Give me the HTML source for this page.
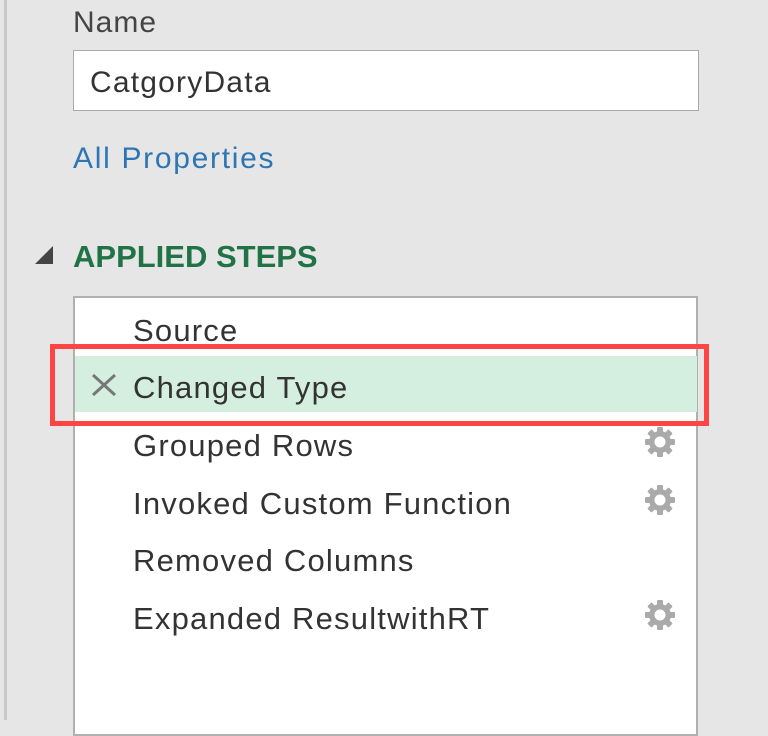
<!DOCTYPE html>
<html><head><style>
body{margin:0;width:768px;height:720px;background:#e6e6e6;position:relative;overflow:hidden;font-family:"Liberation Sans",sans-serif;color:#333}
.a{position:absolute;white-space:nowrap}
.gear{position:absolute;width:34px;height:34px}
.s{font-size:31px;letter-spacing:1.2px}
</style></head><body>
<div class="a" style="left:4px;top:0;width:3px;height:720px;background:#c8c8c8"></div>
<div class="a" style="left:73px;top:6px;font-size:30px;letter-spacing:1px;color:#444">Name</div>
<div class="a" style="left:73px;top:50px;width:624px;height:59px;background:#fff;border:1px solid #aaa"></div>
<div class="a" style="left:90px;top:66px;font-size:30px;letter-spacing:1.2px;color:#333">CatgoryData</div>
<div class="a" style="left:73px;top:142px;font-size:30px;letter-spacing:1.7px;color:#2e75b6">All Properties</div>
<svg class="a" style="left:33px;top:244px" width="20" height="22"><polygon points="20,2 20,20 2,20" fill="#444"/></svg>
<div class="a" style="left:73px;top:239px;font-size:31px;font-weight:bold;color:#217346">APPLIED STEPS</div>
<div class="a" style="left:73px;top:296px;width:625px;height:440px;background:#fff;border:2px solid #b0b0b0;box-sizing:border-box"></div>
<div class="a" style="left:75px;top:356px;width:622px;height:56px;background:#d4eee0"></div>
<div class="a" style="left:50px;top:344px;width:659px;height:82px;border:5px solid #f44;box-sizing:border-box"></div>
<svg class="a" style="left:90px;top:372px" width="28" height="26"><path d="M3 3L25 23M25 3L3 23" stroke="#777" stroke-width="3"/></svg>
<div class="a s" style="left:133px;top:313px">Source</div>
<div class="a s" style="left:133px;top:370px">Changed Type</div>
<div class="a s" style="left:133px;top:428px">Grouped Rows</div>
<div class="a s" style="left:133px;top:486px">Invoked Custom Function</div>
<div class="a s" style="left:133px;top:543px">Removed Columns</div>
<div class="a s" style="left:133px;top:601px">Expanded ResultwithRT</div>
<svg width="0" height="0" style="position:absolute"><defs><g id="g"><g fill="#aaa"><circle cx="17" cy="17" r="11"/><rect x="14" y="2" width="6" height="30" rx="1"/><rect x="14" y="2" width="6" height="30" rx="1" transform="rotate(45 17 17)"/><rect x="14" y="2" width="6" height="30" rx="1" transform="rotate(90 17 17)"/><rect x="14" y="2" width="6" height="30" rx="1" transform="rotate(135 17 17)"/></g><circle cx="17" cy="17" r="5.5" fill="#fff"/></g></defs></svg>
<svg class="gear" style="left:643px;top:425px"><use href="#g"/></svg>
<svg class="gear" style="left:643px;top:483px"><use href="#g"/></svg>
<svg class="gear" style="left:643px;top:598px"><use href="#g"/></svg>
</body></html>
